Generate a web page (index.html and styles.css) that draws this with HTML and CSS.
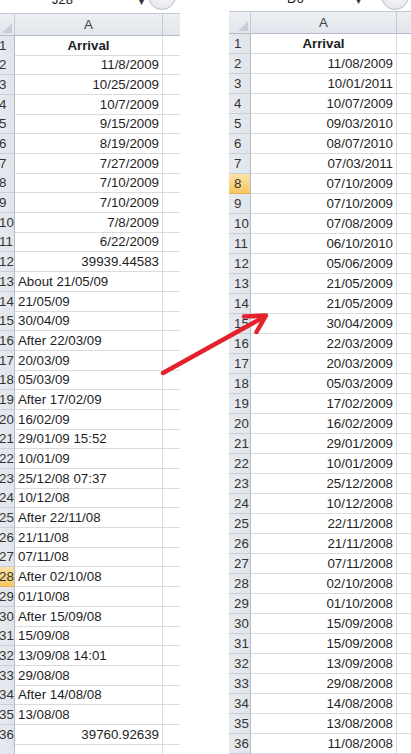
FILE: index.html
```html
<!DOCTYPE html>
<html>
<head>
<meta charset="utf-8">
<link rel="stylesheet" href="styles.css">
</head>
<body>
<div class="page">
  <section class="sheet left">
    <div class="topbar">
      <span class="namebox">J28</span>
      <span class="drop">▾</span>
      <span class="fxbtn"></span>
    </div>
    <div class="grid">
      <div class="row hdr"><div class="corner"><span class="tri"></span></div><div class="colh">A</div><div class="colh"></div></div>
      <div class="row"><div class="rh">1</div><div class="c b">Arrival</div><div class="c"></div></div>
      <div class="row"><div class="rh">2</div><div class="c r">11/8/2009</div><div class="c"></div></div>
      <div class="row"><div class="rh">3</div><div class="c r">10/25/2009</div><div class="c"></div></div>
      <div class="row"><div class="rh">4</div><div class="c r">10/7/2009</div><div class="c"></div></div>
      <div class="row"><div class="rh">5</div><div class="c r">9/15/2009</div><div class="c"></div></div>
      <div class="row"><div class="rh">6</div><div class="c r">8/19/2009</div><div class="c"></div></div>
      <div class="row"><div class="rh">7</div><div class="c r">7/27/2009</div><div class="c"></div></div>
      <div class="row"><div class="rh">8</div><div class="c r">7/10/2009</div><div class="c"></div></div>
      <div class="row"><div class="rh">9</div><div class="c r">7/10/2009</div><div class="c"></div></div>
      <div class="row"><div class="rh">10</div><div class="c r">7/8/2009</div><div class="c"></div></div>
      <div class="row"><div class="rh">11</div><div class="c r">6/22/2009</div><div class="c"></div></div>
      <div class="row"><div class="rh">12</div><div class="c r">39939.44583</div><div class="c"></div></div>
      <div class="row"><div class="rh">13</div><div class="c">About 21/05/09</div><div class="c"></div></div>
      <div class="row"><div class="rh">14</div><div class="c">21/05/09</div><div class="c"></div></div>
      <div class="row"><div class="rh">15</div><div class="c">30/04/09</div><div class="c"></div></div>
      <div class="row"><div class="rh">16</div><div class="c">After 22/03/09</div><div class="c"></div></div>
      <div class="row"><div class="rh">17</div><div class="c">20/03/09</div><div class="c"></div></div>
      <div class="row"><div class="rh">18</div><div class="c">05/03/09</div><div class="c"></div></div>
      <div class="row"><div class="rh">19</div><div class="c">After 17/02/09</div><div class="c"></div></div>
      <div class="row"><div class="rh">20</div><div class="c">16/02/09</div><div class="c"></div></div>
      <div class="row"><div class="rh">21</div><div class="c">29/01/09 15:52</div><div class="c"></div></div>
      <div class="row"><div class="rh">22</div><div class="c">10/01/09</div><div class="c"></div></div>
      <div class="row"><div class="rh">23</div><div class="c">25/12/08 07:37</div><div class="c"></div></div>
      <div class="row"><div class="rh">24</div><div class="c">10/12/08</div><div class="c"></div></div>
      <div class="row"><div class="rh">25</div><div class="c">After 22/11/08</div><div class="c"></div></div>
      <div class="row"><div class="rh">26</div><div class="c">21/11/08</div><div class="c"></div></div>
      <div class="row"><div class="rh">27</div><div class="c">07/11/08</div><div class="c"></div></div>
      <div class="row"><div class="rh sel">28</div><div class="c">After 02/10/08</div><div class="c"></div></div>
      <div class="row"><div class="rh">29</div><div class="c">01/10/08</div><div class="c"></div></div>
      <div class="row"><div class="rh">30</div><div class="c">After 15/09/08</div><div class="c"></div></div>
      <div class="row"><div class="rh">31</div><div class="c">15/09/08</div><div class="c"></div></div>
      <div class="row"><div class="rh">32</div><div class="c">13/09/08 14:01</div><div class="c"></div></div>
      <div class="row"><div class="rh">33</div><div class="c">29/08/08</div><div class="c"></div></div>
      <div class="row"><div class="rh">34</div><div class="c">After 14/08/08</div><div class="c"></div></div>
      <div class="row"><div class="rh">35</div><div class="c">13/08/08</div><div class="c"></div></div>
      <div class="row"><div class="rh">36</div><div class="c r">39760.92639</div><div class="c"></div></div>
      <div class="row"><div class="rh"></div><div class="c"></div><div class="c"></div></div>
    </div>
  </section>

  <section class="sheet right">
    <div class="topbar">
      <span class="namebox">D6</span>
      <span class="drop">▾</span>
      <span class="fxbtn"></span>
    </div>
    <div class="grid">
      <div class="row hdr"><div class="corner"><span class="tri"></span></div><div class="colh">A</div><div class="colh"></div></div>
      <div class="row"><div class="rh">1</div><div class="c b">Arrival</div><div class="c"></div></div>
      <div class="row"><div class="rh">2</div><div class="c r">11/08/2009</div><div class="c"></div></div>
      <div class="row"><div class="rh">3</div><div class="c r">10/01/2011</div><div class="c"></div></div>
      <div class="row"><div class="rh">4</div><div class="c r">10/07/2009</div><div class="c"></div></div>
      <div class="row"><div class="rh">5</div><div class="c r">09/03/2010</div><div class="c"></div></div>
      <div class="row"><div class="rh">6</div><div class="c r">08/07/2010</div><div class="c"></div></div>
      <div class="row"><div class="rh">7</div><div class="c r">07/03/2011</div><div class="c"></div></div>
      <div class="row"><div class="rh sel">8</div><div class="c r">07/10/2009</div><div class="c"></div></div>
      <div class="row"><div class="rh">9</div><div class="c r">07/10/2009</div><div class="c"></div></div>
      <div class="row"><div class="rh">10</div><div class="c r">07/08/2009</div><div class="c"></div></div>
      <div class="row"><div class="rh">11</div><div class="c r">06/10/2010</div><div class="c"></div></div>
      <div class="row"><div class="rh">12</div><div class="c r">05/06/2009</div><div class="c"></div></div>
      <div class="row"><div class="rh">13</div><div class="c r">21/05/2009</div><div class="c"></div></div>
      <div class="row"><div class="rh">14</div><div class="c r">21/05/2009</div><div class="c"></div></div>
      <div class="row"><div class="rh">15</div><div class="c r">30/04/2009</div><div class="c"></div></div>
      <div class="row"><div class="rh">16</div><div class="c r">22/03/2009</div><div class="c"></div></div>
      <div class="row"><div class="rh">17</div><div class="c r">20/03/2009</div><div class="c"></div></div>
      <div class="row"><div class="rh">18</div><div class="c r">05/03/2009</div><div class="c"></div></div>
      <div class="row"><div class="rh">19</div><div class="c r">17/02/2009</div><div class="c"></div></div>
      <div class="row"><div class="rh">20</div><div class="c r">16/02/2009</div><div class="c"></div></div>
      <div class="row"><div class="rh">21</div><div class="c r">29/01/2009</div><div class="c"></div></div>
      <div class="row"><div class="rh">22</div><div class="c r">10/01/2009</div><div class="c"></div></div>
      <div class="row"><div class="rh">23</div><div class="c r">25/12/2008</div><div class="c"></div></div>
      <div class="row"><div class="rh">24</div><div class="c r">10/12/2008</div><div class="c"></div></div>
      <div class="row"><div class="rh">25</div><div class="c r">22/11/2008</div><div class="c"></div></div>
      <div class="row"><div class="rh">26</div><div class="c r">21/11/2008</div><div class="c"></div></div>
      <div class="row"><div class="rh">27</div><div class="c r">07/11/2008</div><div class="c"></div></div>
      <div class="row"><div class="rh">28</div><div class="c r">02/10/2008</div><div class="c"></div></div>
      <div class="row"><div class="rh">29</div><div class="c r">01/10/2008</div><div class="c"></div></div>
      <div class="row"><div class="rh">30</div><div class="c r">15/09/2008</div><div class="c"></div></div>
      <div class="row"><div class="rh">31</div><div class="c r">15/09/2008</div><div class="c"></div></div>
      <div class="row"><div class="rh">32</div><div class="c r">13/09/2008</div><div class="c"></div></div>
      <div class="row"><div class="rh">33</div><div class="c r">29/08/2008</div><div class="c"></div></div>
      <div class="row"><div class="rh">34</div><div class="c r">14/08/2008</div><div class="c"></div></div>
      <div class="row"><div class="rh">35</div><div class="c r">13/08/2008</div><div class="c"></div></div>
      <div class="row"><div class="rh">36</div><div class="c r">11/08/2008</div><div class="c"></div></div>
    </div>
  </section>

  <svg class="arrow" width="411" height="754" viewBox="0 0 411 754">
    <line x1="163" y1="373" x2="264" y2="317" stroke="#e4222b" stroke-width="4.5" stroke-linecap="round"/>
    <polyline points="244,316.5 266,315.5 256.5,332" fill="none" stroke="#e4222b" stroke-width="4.5" stroke-linecap="round" stroke-linejoin="round"/>
  </svg>
</div>
</body>
</html>
```

FILE: styles.css
```css
* { box-sizing: border-box; }
html, body { margin: 0; padding: 0; background: #fff; }
body {
  font-family: "Liberation Sans", Arial, sans-serif;
  font-size: 13.3px;
  color: #1e1e1e;
  width: 411px;
  height: 754px;
  overflow: hidden;
}
.page {
  position: relative;
  display: flex;
  gap: 49px;
  width: 411px;
  height: 754px;
  overflow: hidden;
}
.sheet { overflow: hidden; flex: none; }
.sheet.left { width: 180px; }
.sheet.right { width: 182px; }

.topbar {
  display: flex;
  align-items: flex-start;
  height: 14px;
  border-bottom: 1px solid #c4cad3;
  background: #fff;
  overflow: hidden;
}
.namebox {
  font-size: 13px;
  color: #222;
  line-height: 13px;
  margin-top: -7px;
}
.drop {
  font-size: 10px;
  line-height: 10px;
  color: #333;
  margin-top: -3px;
}
.fxbtn {
  width: 28px;
  height: 28px;
  border-radius: 50%;
  border: 1px solid #b9bec6;
  background: radial-gradient(circle at 50% 40%, #fbfbfc 0%, #e8eaee 70%, #d9dce1 100%);
  margin-top: -18px;
}
.left .namebox { margin-left: 52px; }
.left .drop { margin-left: 66px; }
.left .fxbtn { margin-left: 4px; }
.right .topbar { height: 12px; }
.right .namebox { margin-left: 58px; margin-top: -8px; }
.right .drop { margin-left: 52px; margin-top: -4px; }
.right .fxbtn { margin-left: 20px; }

.grid { display: flex; flex-direction: column; }
.left .grid { margin-left: -5px; }

.row { display: grid; height: 19.7px; }
.left .row { grid-template-columns: 20px 148px 30px; }
.right .row { grid-template-columns: 22px 146px 30px; height: 20px; }
.left .row.hdr { height: 21.6px; }
.right .row.hdr { height: 22px; }

.corner, .colh, .rh {
  background: linear-gradient(#eceff3, #e2e6ec);
  color: #3c3c3c;
}
.corner {
  border-right: 1px solid #c3cad3;
  border-bottom: 1px solid #b3bcc8;
  position: relative;
}
.tri {
  position: absolute;
  right: 2px;
  bottom: 2px;
  width: 0;
  height: 0;
  border-left: 10px solid transparent;
  border-bottom: 10px solid #c9ced5;
}
.colh {
  border-right: 1px solid #c3cad3;
  border-bottom: 1px solid #b3bcc8;
  text-align: center;
  line-height: 21px;
}
.rh {
  background: linear-gradient(90deg, #e7ebf0, #e0e5eb);
  border-right: 1px solid #b3bcc8;
  border-bottom: 1px solid #c9cfd7;
  padding-left: 4px;
  line-height: 19px;
  color: #333;
}
.right .rh { padding-left: 5px; }
.rh.sel {
  background: linear-gradient(#fbe2a8, #f6c85f);
  border-bottom-color: #e2b25a;
}
.c {
  border-right: 1px solid #d9dbdf;
  border-bottom: 1px solid #d9dbdf;
  padding: 0 3px;
  line-height: 19px;
  white-space: nowrap;
  overflow: hidden;
}
.c.r { text-align: right; }
.c.b { text-align: center; font-weight: bold; }

.arrow {
  position: absolute;
  left: 0;
  top: 0;
  pointer-events: none;
}
```
